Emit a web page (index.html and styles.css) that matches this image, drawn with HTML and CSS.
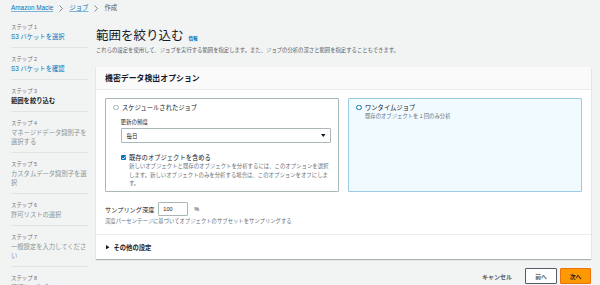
FILE: index.html
```html
<!DOCTYPE html>
<html lang="ja">
<head>
<meta charset="utf-8">
<title>範囲を絞り込む</title>
<link rel="stylesheet" href="styles.css">
</head>
<body>
<div class="crumbs">
  <a class="crumb-link">Amazon Macie</a>
  <svg class="chev" viewBox="0 0 4 7"><polyline points="0.5,0.5 3.5,3.5 0.5,6.5"/></svg>
  <a class="crumb-link">ジョブ</a>
  <svg class="chev" viewBox="0 0 4 7"><polyline points="0.5,0.5 3.5,3.5 0.5,6.5"/></svg>
  <span class="crumb-cur">作成</span>
</div>
<div class="layout">
  <nav class="steps">
    <div class="step"><div class="step-num">ステップ 1</div><a class="step-link">S3 バケットを選択</a></div>
    <div class="step"><div class="step-num">ステップ 2</div><a class="step-link">S3 バケットを確認</a></div>
    <div class="step"><div class="step-num">ステップ 3</div><div class="step-cur">範囲を絞り込む</div></div>
    <div class="step"><div class="step-num">ステップ 4</div><div class="step-dis">マネージドデータ識別子を選択する</div></div>
    <div class="step"><div class="step-num">ステップ 5</div><div class="step-dis">カスタムデータ識別子を選択</div></div>
    <div class="step"><div class="step-num">ステップ 6</div><div class="step-dis">許可リストの選択</div></div>
    <div class="step"><div class="step-num">ステップ 7</div><div class="step-dis">一般設定を入力してください</div></div>
    <div class="step"><div class="step-num">ステップ 8</div><div class="step-dis">確認して作成</div></div>
  </nav>
  <main class="main">
    <h1 class="title">範囲を絞り込む<span class="info">情報</span></h1>
    <p class="desc">これらの設定を使用して、ジョブを実行する範囲を指定します。また、ジョブの分析の深さと範囲を指定することもできます。</p>
    <section class="panel">
      <div class="panel-head">機密データ検出オプション</div>
      <div class="panel-body">
        <div class="cards">
          <div class="card">
            <div class="radio-row"><span class="radio"></span><span class="radio-label">スケジュールされたジョブ</span></div>
            <div class="sub">
              <div class="field-label">更新の頻度</div>
              <div class="select"><span>毎日</span><svg class="caret" viewBox="0 0 6 4"><polygon points="0,0 6,0 3,4"/></svg></div>
              <div class="check-row">
                <span class="check"><svg viewBox="0 0 6 6"><polyline points="1.2,3.1 2.5,4.4 4.9,1.6"/></svg></span>
                <div class="check-text">
                  <div class="check-label">既存のオブジェクトを含める</div>
                  <div class="check-desc">新しいオブジェクトと既存のオブジェクトを分析するには、このオプションを選択します。新しいオブジェクトのみを分析する場合は、このオプションをオフにしま<br>す。</div>
                </div>
              </div>
            </div>
          </div>
          <div class="card selected">
            <div class="radio-row"><span class="radio on"></span><span class="radio-label">ワンタイムジョブ</span></div>
            <div class="card-desc">既存のオブジェクトを１回のみ分析</div>
          </div>
        </div>
        <div class="sampling">
          <span class="samp-label">サンプリング深度</span>
          <span class="samp-input">100</span>
          <span class="samp-pct">%</span>
        </div>
        <div class="samp-desc">深度パーセンテージに基づいてオブジェクトのサブセットをサンプリングする</div>
      </div>
      <div class="more"><svg class="tri" viewBox="0 0 4 5"><polygon points="0,0 4,2.5 0,5"/></svg>その他の設定</div>
    </section>
    <div class="footer">
      <span class="cancel">キャンセル</span>
      <span class="btn">前へ</span>
      <span class="btn primary">次へ</span>
    </div>
  </main>
</div>
</body>
</html>
```

FILE: styles.css
```css
* { box-sizing: border-box; }
html, body { margin: 0; padding: 0; }
body {
  width: 600px;
  height: 285px;
  overflow: hidden;
  background: #f2f3f3;
  color: #16191f;
  font-family: "Liberation Sans", "Noto Sans CJK JP", sans-serif;
}

.crumbs {
  height: 16px;
  padding-left: 11px;
  display: flex;
  align-items: center;
  gap: 4px;
  font-size: 6.4px;
  line-height: 12px;
}
.crumb-link { color: #0073bb; text-decoration: underline; text-decoration-color: #7fb3d7; }
.crumb-cur { color: #545b64; }
.chev { width: 4px; height: 7px; margin: 0 2px; }
.chev polyline { fill: none; stroke: #687078; stroke-width: 0.8; }

.layout { display: flex; padding-left: 11px; }

.steps { width: 77px; flex: none; }
.step { padding: 7px 0 6px; border-bottom: 1px solid #e1e4e4; }
.step:last-child { border-bottom: none; }
.step-num { font-size: 5.4px; line-height: 9px; color: #687078; }
.step-link, .step-cur, .step-dis { display: block; font-size: 6.3px; line-height: 9px; }
.step-link { color: #0073bb; }
.step-cur { color: #16191f; font-weight: 700; }
.step-dis { color: #879596; }

.main { flex: 1; margin-left: 8px; padding-right: 9px; }
.title {
  margin: 12px 0 0;
  font-size: 12.5px;
  line-height: 16px;
  font-weight: 400;
}
.info { font-size: 4.6px; line-height: 1; font-weight: 700; color: #0073bb; margin-left: 5px; }
.desc { margin: 2px 0 0; font-size: 5.35px; line-height: 8px; color: #545b64; }

.panel {
  margin-top: 13px;
  background: #fff;
  box-shadow: 0 1px 1px rgba(0, 28, 36, 0.3);
}
.panel-head {
  height: 23px;
  line-height: 23px;
  padding-left: 9px;
  background: #fafafa;
  border-bottom: 1px solid #eaeded;
  font-size: 7.9px;
  font-weight: 700;
}
.panel-body { padding: 8px 9px 9px; border-bottom: 1px solid #eaeded; }
.cards { display: flex; gap: 9px; }
.card {
  flex: 1;
  height: 94px;
  border: 1px solid #aab7b8;
  border-radius: 1px;
  padding: 4px 7px 0;
}
.card.selected { background: #f1faff; border-color: #99cbe4; }
.radio-row { display: flex; align-items: center; gap: 3.5px; height: 9px; }
.radio {
  width: 5.5px; height: 5.5px;
  border-radius: 50%;
  border: 0.7px solid #aab7b8;
  background: #fff;
  flex: none;
}
.radio.on { border: 1.7px solid #0073bb; }
.radio-label { font-size: 6.3px; line-height: 9px; color: #16191f; }
.card-desc { margin-left: 9px; font-size: 5.35px; line-height: 8px; color: #687078; }

.sub { margin-left: 7.5px; }
.field-label { margin-top: 6px; font-size: 5.5px; line-height: 8px; color: #16191f; }
.select {
  margin-top: 2px;
  height: 15px;
  border: 1px solid #aab7b8;
  border-radius: 1px;
  display: flex;
  align-items: center;
  justify-content: space-between;
  padding: 0 5px;
  font-size: 5.5px;
  background: #fff;
}
.caret { width: 4.5px; height: 3px; }
.caret polygon { fill: #16191f; }
.check-row { display: flex; gap: 3px; margin-top: 10px; }
.check {
  width: 5.5px; height: 5.5px;
  margin-top: 1.8px;
  background: #0073bb;
  border-radius: 1px;
  flex: none;
  display: flex;
}
.check svg { width: 5.5px; height: 5.5px; }
.check polyline { fill: none; stroke: #fff; stroke-width: 1; }
.check-label { font-size: 6.3px; line-height: 9px; }
.check-desc {
  font-size: 5.4px;
  line-height: 8.5px;
  color: #687078;
  width: 201px;
}

.sampling { display: flex; align-items: center; margin-top: 10px; height: 14px; }
.samp-label { font-size: 6.2px; }
.samp-input {
  margin-left: 4px;
  width: 30px; height: 14px;
  border: 1px solid #aab7b8;
  border-radius: 1px;
  font-size: 5.5px;
  line-height: 12px;
  padding-left: 4px;
  background: #fff;
}
.samp-pct { margin-left: 6px; font-size: 5.5px; }
.samp-desc { margin-top: 1px; font-size: 5.35px; line-height: 8px; color: #687078; }

.more {
  height: 24px;
  display: flex;
  align-items: center;
  padding-left: 10px;
  font-size: 6.3px;
  font-weight: 700;
}
.tri { width: 3.5px; height: 4.5px; margin-right: 4px; }
.tri polygon { fill: #16191f; }

.footer {
  margin-top: 9px;
  display: flex;
  justify-content: flex-end;
  align-items: center;
  gap: 3px;
}
.cancel { font-size: 6px; font-weight: 700; color: #545b64; margin-right: 10px; }
.btn {
  width: 32px;
  height: 16px;
  display: flex;
  align-items: center;
  justify-content: center;
  border: 1px solid #545b64;
  border-radius: 1px;
  background: #fff;
  font-size: 5.8px;
  font-weight: 700;
  color: #545b64;
}
.btn.primary { width: 31px; background: #ff9900; border-color: #ec7211; color: #16191f; }
```
